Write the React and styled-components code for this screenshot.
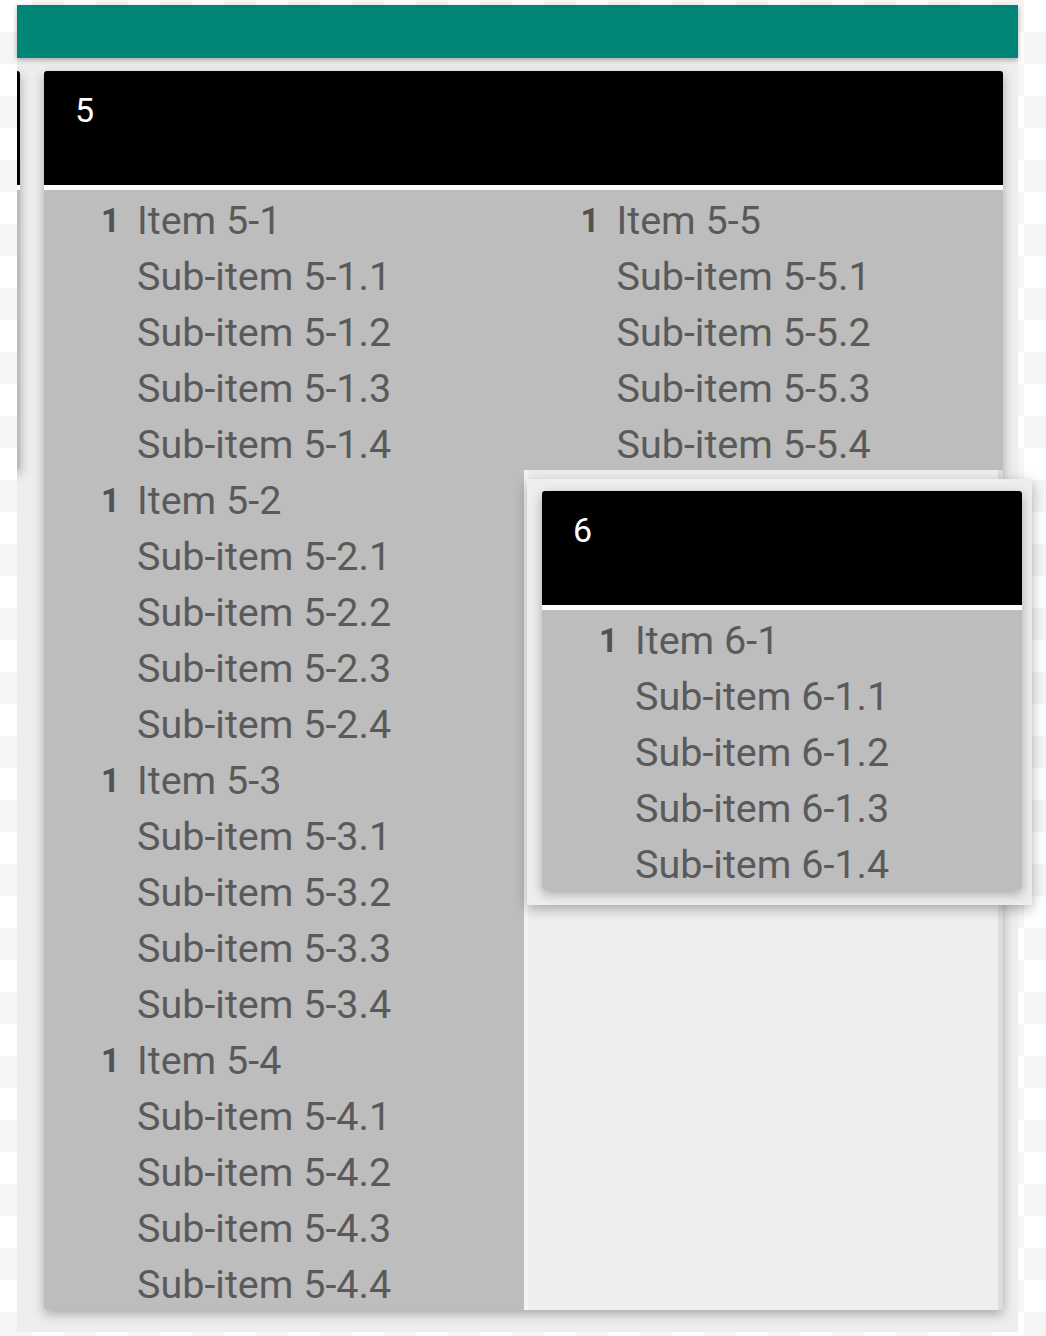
import React from "react";
import styled, { createGlobalStyle } from "styled-components";

const subsFor = (prefix) => [1, 2, 3, 4].map((s) => `Sub-item ${prefix}.${s}`);

// the card to the left is scrolled out of view: only its right edge shows,
// so it is drawn as blank rows
const board = [
  {
    id: "4",
    peek: true,
    columns: [[{ title: "", subs: ["", "", "", ""] }], [{ title: "", subs: ["", "", "", ""] }]],
  },
  {
    id: "5",
    columns: [
      [1, 2, 3, 4].map((n) => ({ title: `Item 5-${n}`, subs: subsFor(`5-${n}`) })),
      [{ title: "Item 5-5", subs: subsFor("5-5") }],
    ],
  },
];

const dragged = {
  id: "6",
  columns: [[{ title: "Item 6-1", subs: subsFor("6-1") }]],
};

export default function App() {
  return (
    <>
      <GlobalStyle />
      <Frame>
        <AppBar />
        <Board>
          {board.map((card) => (
            <Card key={card.id} card={card} />
          ))}
        </Board>
        <DragOverlay>
          <Card card={dragged} single />
        </DragOverlay>
      </Frame>
    </>
  );
}

function Card({ card, single }) {
  return (
    <CardBox $peek={card.peek} $single={single}>
      <CardHeader>{card.peek ? null : card.id}</CardHeader>
      <CardBody $cols={card.columns.length}>
        {card.columns.map((col, ci) => (
          <Column key={ci}>
            <List>
              {col.map((item, ii) => (
                <React.Fragment key={ii}>
                  <Row>
                    {!card.peek && <Num>1</Num>}
                    {item.title}
                  </Row>
                  {item.subs.map((s, si) => (
                    <Row key={si} $sub>
                      {s}
                    </Row>
                  ))}
                </React.Fragment>
              ))}
            </List>
            {ci > 0 && !card.peek && <Filler />}
          </Column>
        ))}
      </CardBody>
    </CardBox>
  );
}

const GlobalStyle = createGlobalStyle`
  html, body {
    margin: 0;
    padding: 0;
  }
  body {
    font-family: Roboto, "Noto Sans", sans-serif;
    background-color: #ffffff;
    background-image:
      linear-gradient(45deg, #f5f5f5 25%, transparent 25%, transparent 75%, #f5f5f5 75%),
      linear-gradient(45deg, #f5f5f5 25%, transparent 25%, transparent 75%, #f5f5f5 75%);
    background-size: 64px 64px;
    background-position: 0 0, 32px 32px;
  }
`;

const Frame = styled.div`
  position: relative;
  width: 1001px;
  margin: 5px 0 0 17px;
`;

const AppBar = styled.header`
  position: relative;
  z-index: 2;
  height: 53px;
  background: #008577;
  box-shadow: 0 2px 5px rgba(0, 0, 0, 0.3);
`;

const Board = styled.main`
  display: flex;
  align-items: flex-start;
  gap: 24px;
  height: 1274px;
  padding-top: 13px;
  box-sizing: border-box;
  background: #eeeeee;
  overflow: hidden;
`;

const CardBox = styled.section`
  flex-shrink: 0;
  width: ${(p) => (p.$single ? "480px" : "959px")};
  margin-left: ${(p) => (p.$peek ? "-956px" : "0")};
  border-radius: 3px;
  overflow: hidden;
  background: #eeeeee;
  box-shadow: 0 4px 12px rgba(0, 0, 0, 0.3);
`;

const CardHeader = styled.div`
  height: 92px;
  padding: 22px 31px 0;
  background: #000;
  border-bottom: 5px solid #ffffff;
  color: #ffffff;
  font-size: 34px;
  line-height: 1;
`;

const CardBody = styled.div`
  display: grid;
  grid-template-columns: repeat(${(p) => p.$cols}, 1fr);
`;

const Column = styled.div`
  display: flex;
  flex-direction: column;
`;

const List = styled.div`
  background: #bdbdbd;
`;

const Filler = styled.div`
  flex: 1;
  background: #eeeeee;
  border-left: 4px solid #f4f4f4;
  border-right: 5px solid #dcdcdc;
`;

const Row = styled.div`
  display: flex;
  align-items: center;
  height: 56px;
  box-sizing: border-box;
  padding-top: 4px;
  padding-left: ${(p) => (p.$sub ? "93px" : "57px")};
  color: #5a5a5a;
  font-size: 39.5px;
  white-space: nowrap;
`;

const Num = styled.span`
  width: 36px;
  font-size: 33px;
  font-weight: 700;
  color: #525252;
`;

const DragOverlay = styled.div`
  position: absolute;
  z-index: 3;
  left: 510px;
  top: 474px;
  width: 505px;
  height: 426px;
  box-sizing: border-box;
  padding: 12px 10px 15px 15px;
  background: #eeeeee;
  box-shadow: 0 4px 12px rgba(0, 0, 0, 0.3);
`;
